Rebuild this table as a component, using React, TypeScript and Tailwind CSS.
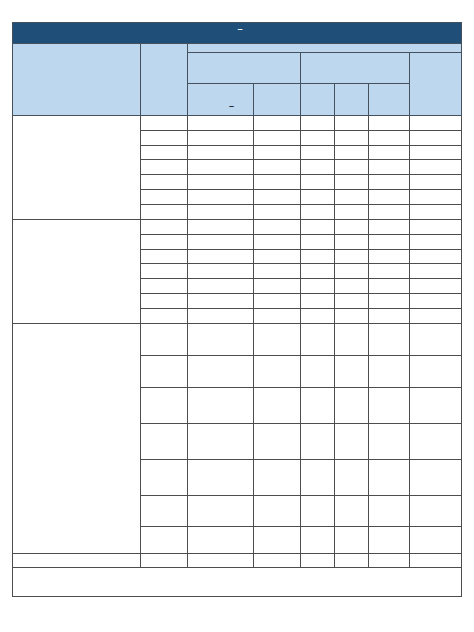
const colWidths = [128, 47, 66, 47, 34, 34, 41, 52];

const sections = [
  [15, 15, 14, 15, 15, 15, 15],
  [15, 15, 14, 15, 15, 15, 15],
  [32, 32, 36, 36, 36, 31, 27],
];

const cell = "border border-[#4d4d4d] p-0";
const headCell = "border border-[#45515c] p-0";

export default function App() {
  return (
    <div className="min-h-[632px] w-[474px] bg-white pl-[12px] pt-[22px] font-['Liberation_Sans',Arial,sans-serif]">
      <table className="w-[449px] table-fixed border-collapse">
        <colgroup>
          {colWidths.map((w, i) => (
            <col key={i} style={{ width: w }} />
          ))}
        </colgroup>
        <thead>
          <tr className="h-[21px]">
            <th colSpan={8} className={`${headCell} bg-[#1f4e79] align-top`}>
              <div className="pt-[2px] pl-[6px] text-center text-[9px] font-bold leading-[9px] text-white">–</div>
            </th>
          </tr>
          <tr className="h-[9px]">
            <th rowSpan={3} className={`${headCell} bg-[#bdd7ee]`} />
            <th rowSpan={3} className={`${headCell} bg-[#bdd7ee]`} />
            <th colSpan={6} className={`${headCell} bg-[#bdd7ee]`} />
          </tr>
          <tr className="h-[31px]">
            <th colSpan={2} className={`${headCell} bg-[#bdd7ee]`} />
            <th colSpan={3} className={`${headCell} bg-[#bdd7ee]`} />
            <th rowSpan={2} className={`${headCell} bg-[#bdd7ee]`} />
          </tr>
          <tr className="h-[32px]">
            <th className={`${headCell} bg-[#bdd7ee] align-bottom`}>
              <div className="pb-[4px] pl-[22px] text-center text-[9px] font-bold leading-[9px] text-[#1b2a3a]">–</div>
            </th>
            <th className={`${headCell} bg-[#bdd7ee]`} />
            <th className={`${headCell} bg-[#bdd7ee]`} />
            <th className={`${headCell} bg-[#bdd7ee]`} />
            <th className={`${headCell} bg-[#bdd7ee]`} />
          </tr>
        </thead>
        <tbody>
          {sections.map((rows, s) =>
            rows.map((h, r) => (
              <tr key={`${s}-${r}`} style={{ height: h }}>
                {r === 0 && <td rowSpan={rows.length} className={cell} />}
                {colWidths.slice(1).map((_, c) => (
                  <td key={c} className={cell} />
                ))}
              </tr>
            ))
          )}
          <tr className="h-[14px]">
            {colWidths.map((_, c) => (
              <td key={c} className={cell} />
            ))}
          </tr>
          <tr className="h-[29px]">
            <td colSpan={8} className={cell} />
          </tr>
        </tbody>
      </table>
    </div>
  );
}
